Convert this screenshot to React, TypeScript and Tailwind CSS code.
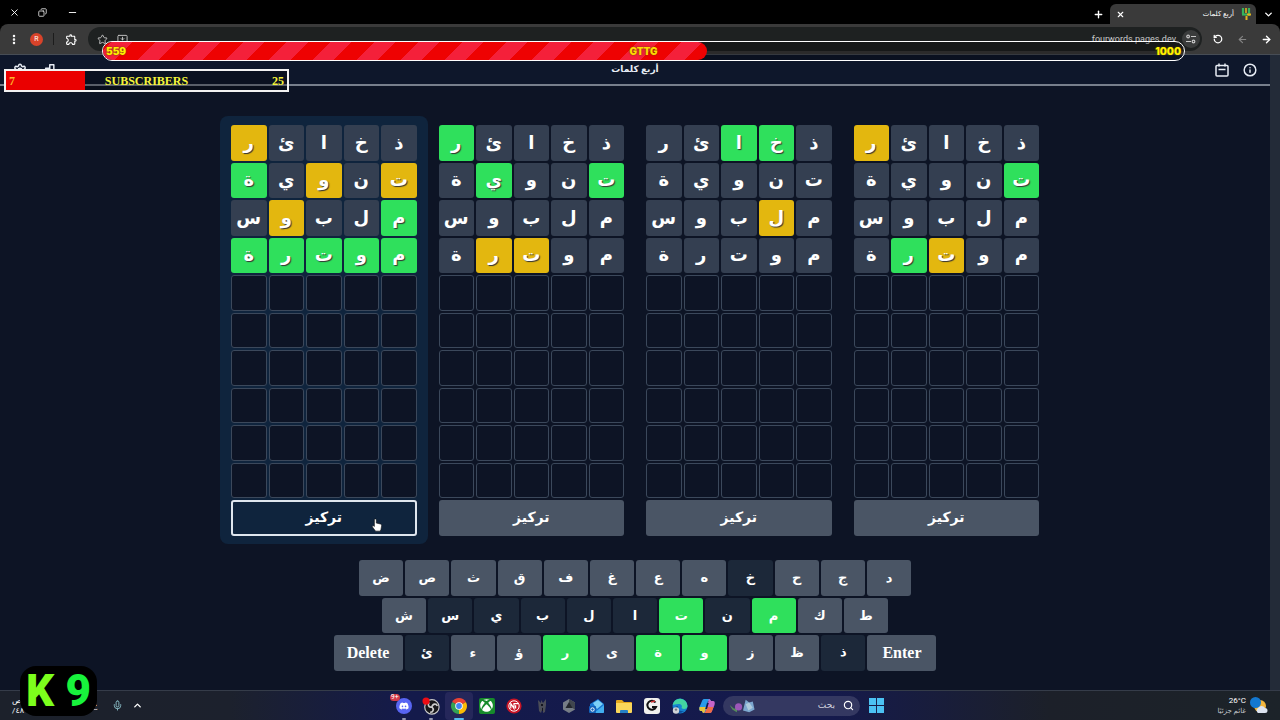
import type { ReactNode } from "react";
import {
  ArrowLeft,
  ArrowRight,
  ChevronDown,
  ChevronUp,
  Copy,
  EllipsisVertical,
  Info,
  Mic,
  Minus,
  MonitorDown,
  Plus,
  RotateCcw,
  Search,
  Settings,
  Star,
  X,
} from "lucide-react";
import { FaDiscord, FaXbox } from "react-icons/fa6";
import { MdOutlineExtension } from "react-icons/md";
import clsx from "clsx";

const guesses = ["ذخائر", "تنوية", "ملبوس", "موترة"];

// g = right place, y = wrong place, - = not in the word; first mark is the rightmost letter
const boards = [
  { id: 1, focused: true, marks: ["----y", "y-y-g", "g--y-", "ggggg"] },
  { id: 2, focused: false, marks: ["----g", "g--g-", "-----", "--yy-"] },
  { id: 3, focused: false, marks: ["-gg--", "-----", "-y---", "-----"] },
  { id: 4, focused: false, marks: ["----y", "g----", "-----", "--yg-"] },
];

const ROWS = 10;

const cellStyles: Record<string, string> = {
  g: "bg-[#2fe05c] [text-shadow:1px_1px_1px_#333]",
  y: "bg-[#e3b70f] [text-shadow:1px_1px_1px_#333]",
  "-": "bg-[#343f51]",
};

const keyRows = [
  { keys: "ضصثقفغعهخحجد", width: "max-w-[552px]" },
  { keys: "شسيبلاتنمكط", width: "max-w-[506px]" },
  { keys: "ئءؤرىةوزظذ", width: "max-w-[603px]" },
];
const foundKeys = "تمرةو";
const usedKeys = "خسيبلانئذ";

function Board({ marks, focused }: { marks: string[]; focused: boolean }) {
  return (
    <section className={clsx("rounded-lg px-[11px] pt-[9px] pb-2", focused && "bg-[#0f243d]")}>
      <div dir="rtl" className="grid h-[411px] grid-cols-5 grid-rows-11 gap-0.5">
        {Array.from({ length: ROWS * 5 }, (_, i) => {
          const row = Math.floor(i / 5);
          const letter = guesses[row]?.[i % 5];
          return letter ? (
            <div
              key={i}
              className={clsx(
                "flex items-center justify-center rounded-[3px] text-lg leading-none font-bold text-white",
                cellStyles[marks[row][i % 5]]
              )}
            >
              {letter}
            </div>
          ) : (
            <div key={i} className="rounded-[3px] border border-[#3b485b] bg-[#0d1425]" />
          );
        })}
        <button
          type="button"
          className={clsx(
            "col-span-5 rounded-[3px] text-sm leading-none font-bold text-white",
            focused ? "border-2 border-[#dfe6ee] bg-[#0f243d]" : "bg-[#4a5565]"
          )}
        >
          تركيز
        </button>
      </div>
    </section>
  );
}

function Key({ label, wide = false }: { label: string; wide?: boolean }) {
  return (
    <button
      type="button"
      className={clsx(
        "rounded-[3px] font-bold text-white",
        wide ? "w-[69px] text-base" : "min-w-0 flex-1 text-[13px]",
        !wide && foundKeys.includes(label) ? "bg-[#2fe05c]" : !wide && usedKeys.includes(label) ? "bg-[#1c2839]" : "bg-[#4a5565]"
      )}
    >
      {label}
    </button>
  );
}

function Keyboard() {
  return (
    <div className="mt-4 grid h-[111px] grid-rows-3 gap-0.5">
      {keyRows.map(({ keys, width }, i) => (
        <div key={keys} className={clsx("mx-auto flex w-full gap-0.5", width)}>
          {i === 2 && <Key label="Delete" wide />}
          {keys.split("").map((k) => (
            <Key key={k} label={k} />
          ))}
          {i === 2 && <Key label="Enter" wide />}
        </div>
      ))}
    </div>
  );
}

function IconButton({ label, className, children }: { label: string; className?: string; children: ReactNode }) {
  return (
    <button type="button" aria-label={label} className={clsx("flex shrink-0 items-center justify-center", className)}>
      {children}
    </button>
  );
}

function Browser() {
  return (
    <div className="bg-black font-['Roboto','DejaVu_Sans',sans-serif] text-white">
      <div className="flex h-6 items-end justify-between pr-1.5">
        <div className="flex h-6 items-center gap-4 pl-2">
          <IconButton label="Close window" className="w-3"><X size={11} /></IconButton>
          <IconButton label="Restore" className="w-3"><Copy size={9} className="-scale-x-100" /></IconButton>
          <IconButton label="Minimize" className="w-4"><Minus size={11} /></IconButton>
        </div>
        <div className="flex h-5 items-center">
          <IconButton label="New tab" className="mr-1.5 w-3"><Plus size={11} strokeWidth={3} /></IconButton>
          <div className="flex h-full w-[146px] items-center justify-between rounded-t-md bg-[#3a3a3a] px-1">
            <IconButton label="Close tab" className="w-3"><X size={9} strokeWidth={3} /></IconButton>
            <div className="flex items-center gap-1.5">
              <span dir="rtl" className="text-[7px] leading-none">أربع كلمات</span>
              <svg viewBox="0 0 10 12" className="h-3 w-3">
                <path d="M2 0v6" stroke="#35b45b" strokeWidth="2.2" />
                <path d="M5 0v5" stroke="#e2b31d" strokeWidth="1.6" />
                <path d="M8 0v8" stroke="#35b45b" strokeWidth="2.2" />
                <path d="M1 6.500h5" stroke="#35b45b" strokeWidth="2.2" />
                <path d="M6 6.500h4M5.500 8v4" stroke="#e2b31d" strokeWidth="2" />
              </svg>
            </div>
          </div>
          <IconButton label="Search tabs" className="ml-1.5 w-3"><ChevronDown size={11} strokeWidth={3} /></IconButton>
        </div>
      </div>
      <div className="flex h-[31px] items-center rounded-t-lg border-b border-[#474d55] bg-[#3a3a3a] px-2">
        <IconButton label="Menu" className="w-3"><EllipsisVertical size={13} strokeWidth={3} /></IconButton>
        <IconButton label="Profile" className="ml-2.5 h-[13px] w-[13px] rounded-full bg-[#d8432a] text-[7px]">R</IconButton>
        <span className="mx-2.5 h-3 w-px bg-[#1c1c1c]" />
        <IconButton label="Extensions" className="w-3.5"><MdOutlineExtension size={13} /></IconButton>
        <div className="ml-2.5 flex h-6 flex-1 items-center justify-between rounded-full bg-[#1e2121] pr-0.5 pl-2 text-[#c9c9c9]">
          <div className="flex items-center gap-2">
            <IconButton label="Bookmark" className="w-3"><Star size={11} /></IconButton>
            <IconButton label="Install app" className="w-3"><MonitorDown size={11} /></IconButton>
          </div>
          <div className="flex items-center gap-1.5">
            <span className="text-[9px] leading-none">fourwords.pages.dev</span>
            <IconButton label="Site settings" className="h-[18px] w-[18px] rounded-full bg-[#3a3c3c]">
              <svg viewBox="0 0 12 12" className="h-2.5 w-2.5" fill="none" stroke="currentColor" strokeWidth="1.4">
                <circle cx="2.500" cy="3" r="1.600" />
                <path d="M6 3h6M0 9h6" />
                <circle cx="9" cy="9" r="1.600" />
              </svg>
            </IconButton>
          </div>
        </div>
        <div className="ml-2.5 flex items-center gap-3">
          <IconButton label="Reload" className="w-3"><RotateCcw size={10} strokeWidth={3} /></IconButton>
          <IconButton label="Forward" className="w-3 text-[#858585]"><ArrowLeft size={11} strokeWidth={2.5} /></IconButton>
          <IconButton label="Back" className="w-3"><ArrowRight size={11} strokeWidth={3} /></IconButton>
        </div>
      </div>
    </div>
  );
}

function Header() {
  return (
    <header className="grid h-[31px] grid-cols-[1fr_auto_1fr] items-center border-b-2 border-[#777f8c] bg-[#0e172b] px-3 text-[#e8edf5]">
      <div className="flex gap-3">
        <IconButton label="الإعدادات" className="w-4"><Settings size={14} strokeWidth={2.5} /></IconButton>
        <IconButton label="الإحصائيات" className="w-4">
          <svg viewBox="0 0 24 24" className="h-3.5 w-3.5" fill="none" stroke="currentColor" strokeWidth="2.5" strokeLinejoin="round">
            <path d="M2 15h6v6H2zM8 9h7v12H8zM15 3h7v18h-7z" />
          </svg>
        </IconButton>
      </div>
      <h1 dir="rtl" className="text-[9px] leading-none font-bold">أربع كلمات</h1>
      <div className="flex justify-end gap-3">
        <IconButton label="التقويم" className="w-4">
          <svg viewBox="0 0 14 14" className="h-3.5 w-3.5" fill="none" stroke="currentColor" strokeWidth="1.5">
            <rect x="1" y="2.500" width="12" height="10.500" rx="1" />
            <path d="M4 .5v3M10 .5v3M3.500 6.500h7" />
          </svg>
        </IconButton>
        <IconButton label="معلومات" className="w-4"><Info size={14} strokeWidth={2.5} /></IconButton>
      </div>
    </header>
  );
}

function StreamOverlay() {
  return (
    <>
      <div className="absolute top-[41px] right-[95px] left-[102px] h-5 overflow-hidden rounded-full border border-white bg-black/25 font-['Inter',sans-serif] text-[10px] leading-none font-black text-[#fff000] [text-shadow:0_0_2px_#5a4a00]">
        <div
          className="h-full rounded-r-full bg-[repeating-linear-gradient(135deg,#ee0202_0_6px,#f4203a_6px_21px,#ee0202_21px_31px)]"
          style={{ width: `${(559 / 1000) * 100}%` }}
        />
        <div className="absolute inset-0 grid grid-cols-3 items-center px-[3px]">
          <span>559</span>
          <span className="text-center text-[#ffd800]">GTTG</span>
          <span className="text-right">1000</span>
        </div>
      </div>
      <div className="absolute top-[69px] left-1 h-[23px] w-[285px] border-2 border-[#f2f2f2] bg-black/25 text-xs leading-none font-bold text-[#f5f53a]">
        <div className="h-full bg-[#ea0000]" style={{ width: `${(7 / 25) * 100}%` }} />
        <div className="absolute inset-0 grid grid-cols-[1fr_auto_1fr] items-center px-[3px]">
          <span className="text-[#ffb52a]">7</span>
          <span>SUBSCRIBERS</span>
          <span className="text-right">25</span>
        </div>
      </div>
      <div className="absolute bottom-1 left-5 flex h-[50px] w-[77px] items-center justify-between rounded-2xl bg-black px-1.5 font-['Roboto',sans-serif] text-[44px] leading-none font-black">
        <span className="text-[#7dff1c]">K</span>
        <span className="text-[#18f43c]">9</span>
      </div>
    </>
  );
}

function Pointer() {
  return (
    <svg viewBox="0 0 12 16" className="pointer-events-none absolute top-[518px] left-[371px] h-3.5 w-3">
      <path
        d="M3.3 1.2c.9-.5 1.8.1 1.9 1v3.6l4.6 1c1.1.3 1.6 1 1.5 2.2l-.8 4.2-.9 1.8H4.4L.8 10.3c-.6-1 .5-2 1.500-1.200l.7.6V2.100c0-.4.1-.7.3-.9z"
        fill="#fff"
        stroke="#111"
        strokeWidth=".7"
      />
    </svg>
  );
}

const apps: { name: string; open?: boolean; icon: ReactNode }[] = [
  {
    name: "Discord",
    open: true,
    icon: (
      <span className="relative flex h-4 w-4 items-center justify-center rounded-full bg-[#5865f2]">
        <FaDiscord size={10} />
        <span className="absolute -top-1 -left-1.5 rounded-full bg-[#d33a4a] px-px text-[7px] leading-none">9+</span>
      </span>
    ),
  },
  {
    name: "OBS Studio",
    open: true,
    icon: (
      <svg viewBox="0 0 20 20" className="h-[18px] w-[18px]">
        <circle cx="11" cy="11" r="8" fill="#17171a" stroke="#c9c9c9" strokeWidth="1.3" />
        <path d="M11 11c-4 1-5-3-3-5M11 11c1-4 5-4 6-1M11 11c3 3 1 6-2 6" stroke="#ccc" strokeWidth="1.8" fill="none" />
        <circle cx="4.500" cy="4.500" r="4" fill="#ed0c14" />
      </svg>
    ),
  },
  {
    name: "Chrome",
    open: true,
    icon: (
      <svg viewBox="0 0 20 20" className="h-4 w-4">
        <path d="M10 10 1.340 5A10 10 0 0 1 18.660 5z" fill="#e94335" />
        <path d="M10 10 18.660 5A10 10 0 0 1 10 20z" fill="#fbbc05" />
        <path d="M10 10v10A10 10 0 0 1 1.340 5z" fill="#34a353" />
        <circle cx="10" cy="10" r="4.700" fill="#fff" />
        <circle cx="10" cy="10" r="3.600" fill="#4285f4" />
      </svg>
    ),
  },
  {
    name: "Xbox",
    icon: (
      <span className="flex h-4 w-4 items-center justify-center rounded-xs bg-[#168a2b]">
        <FaXbox size={13} />
      </span>
    ),
  },
  {
    name: "Nitro",
    icon: (
      <svg viewBox="0 0 20 20" className="h-4 w-4">
        <circle cx="10" cy="10" r="9.500" fill="#c81425" />
        <circle cx="10" cy="10" r="6.500" fill="none" stroke="#fff" strokeWidth="1.2" />
        <path d="M6 13V7l4 6V7h5M12 9v4" stroke="#fff" strokeWidth="1.5" fill="none" />
      </svg>
    ),
  },
  {
    name: "Game",
    icon: (
      <svg viewBox="0 0 16 16" className="h-4 w-4">
        <path d="M4 2l3 3V2l2 3 3-4v6l-1 7-2 1V9L7 15l-2-2z" fill="#4b4d57" />
        <path d="M7 6h2v2H7zM8 10h1v3H8z" fill="#14151f" />
      </svg>
    ),
  },
  {
    name: "Launcher",
    icon: (
      <svg viewBox="0 0 16 16" className="h-4 w-4">
        <path d="M8 1l6 3.500v7L8 15l-6-3.500v-7z" fill="#767d86" />
        <path d="M8 1l6 3.500v7L8 8z" fill="#40464e" />
        <path d="M8 4l3.500 6h-7z" fill="#22262c" />
      </svg>
    ),
  },
  {
    name: "Outlook",
    icon: (
      <svg viewBox="0 0 16 16" className="h-4 w-4">
        <path d="M1 6l8-5 6 5v8a1 1 0 0 1-1 1H3a2 2 0 0 1-2-2z" fill="#1776d2" />
        <path d="M4 5l5-3 5 4-6 5z" fill="#7cd0f7" />
        <path d="M15 7v7a1 1 0 0 1-1 1H5z" fill="#42aef0" />
        <rect x="0" y="8" width="7" height="7" rx="1" fill="#1261b8" />
        <circle cx="3.500" cy="11.500" r="1.700" fill="none" stroke="#fff" />
      </svg>
    ),
  },
  {
    name: "File Explorer",
    icon: (
      <svg viewBox="0 0 16 16" className="h-4 w-4">
        <path d="M0 3a1 1 0 0 1 1-1h5l2 2h7a1 1 0 0 1 1 1v9H0z" fill="#e6a91d" />
        <path d="M0 5h16v9a1 1 0 0 1-1 1H1a1 1 0 0 1-1-1z" fill="#fbd75a" />
        <path d="M4 15v-2a1 1 0 0 1 1-1h6a1 1 0 0 1 1 1v2z" fill="#2580c8" />
      </svg>
    ),
  },
  {
    name: "Logitech G",
    icon: (
      <svg viewBox="0 0 16 16" className="h-4 w-4">
        <rect width="16" height="16" rx="3" fill="#f1f1ee" />
        <path d="M11.500 4.500A4.500 4.500 0 1 0 12 9H8" fill="none" stroke="#111" strokeWidth="2" />
        <path d="M7 4l4-1" stroke="#cf3030" strokeWidth="1.500" />
      </svg>
    ),
  },
  {
    name: "Edge",
    icon: (
      <svg viewBox="0 0 16 16" className="h-4 w-4">
        <circle cx="8" cy="8" r="7.500" fill="#1683cf" />
        <path d="M.6 7A7.500 7.500 0 0 1 15.500 8c0 3-4 4-6 2 1-2 0-4-3-4S1.500 7 .6 7z" fill="#43d4a0" />
        <path d="M6 8c-1 3 2 6 6 5-3 3-8 2-9-2 0-2 1-3 3-3z" fill="#0c4e9c" />
        <circle cx="4" cy="12.500" r="3.200" fill="#cfd3d6" />
        <circle cx="4" cy="11.600" r="1.200" fill="#737a82" />
      </svg>
    ),
  },
  {
    name: "Copilot",
    icon: (
      <svg viewBox="0 0 16 16" className="h-4 w-4">
        <path d="M5 1h5c1 0 1.500 1 2 2H9L7 12c-.5 2-1 3-2 3s-1.500-1-2-2H2c-2 0-2-2-1.500-4L3 3c.4-1 1-2 2-2z" fill="#2a9be8" />
        <path d="M.5 9H7l-1 4c-.3 1-.7 2-1.500 2S3.500 14 3 13H2C.3 13 .1 11 .5 9z" fill="#e9c33a" />
        <path d="M10 1c1 0 1.500 1 2 2h2c2 0 2 2 1.500 4L13 13c-.4 1-1 2-2 2H5c1 0 1.500-1 2-3l2-7c.5-2 .5-4 1-4z" fill="#c765c8" />
        <path d="M8 9h6.500L13 13c-.4 1-1 2-2 2H5c1 0 1.500-1 2-3z" fill="#f06b43" />
        <path d="M8 5h1.800L8 11H6.200z" fill="#151a4c" />
      </svg>
    ),
  },
];

function Taskbar() {
  return (
    <footer className="grid h-[30px] grid-cols-[1fr_auto_1fr] items-center border-t border-[#353c49] bg-[linear-gradient(90deg,#1c212b_0%,#1c212d_18%,#141a4b_32%,#151a4c_65%,#1c2029_82%,#1c2329_100%)] font-['Roboto','DejaVu_Sans',sans-serif] text-white">
      <div className="flex items-center pl-3">
        <div className="w-20 text-[8px] leading-[10px]">
          <div>ص</div>
          <div dir="rtl" className="w-3">٤٨/</div>
        </div>
        <span className="text-[9px] leading-none">ع</span>
        <IconButton label="Microphone" className="ml-3.5 w-3 text-[#8dc3cc]"><Mic size={11} /></IconButton>
        <IconButton label="Hidden icons" className="ml-2 w-3"><ChevronUp size={11} strokeWidth={3} /></IconButton>
      </div>
      <nav className="flex items-center">
        <div className="flex w-[331px]">
          {apps.map(({ name, open, icon }) => (
            <IconButton
              key={name}
              label={name}
              className={clsx("relative h-7 flex-1 rounded-sm", name === "Chrome" && "bg-[#25275a]")}
            >
              {icon}
              {open && (
                <span
                  className={clsx(
                    "absolute bottom-0 h-0.5 rounded-full",
                    name === "Chrome" ? "w-2.5 bg-[#55bdf0]" : "w-1 bg-[#9297ad]"
                  )}
                />
              )}
            </IconButton>
          ))}
        </div>
        <label className="mx-0.5 flex h-5 w-[137px] items-center gap-1 rounded-full bg-[#343861] px-1.5">
          <svg viewBox="0 0 30 18" className="h-4 w-7 shrink-0">
            <path d="M0 8l5 4 4-2-1 6-5-3z" fill="#548c5a" />
            <circle cx="10" cy="10" r="4" fill="#9b56b8" />
            <path d="M15 14l3-12 4 3 4-1 2 9-6 3z" fill="#7ca7cf" />
            <path d="M18 7l4-2 4 6-5 3z" fill="#aecbdd" />
          </svg>
          <input
            dir="rtl"
            aria-label="بحث"
            placeholder="بحث"
            className="min-w-0 flex-1 bg-transparent text-[9px] outline-none placeholder:text-[#d0d2de]"
          />
          <Search size={11} className="ml-1 shrink-0" strokeWidth={2.5} />
        </label>
        <IconButton label="Start" className="h-7 w-7">
          <svg viewBox="0 0 16 16" className="h-[15px] w-[15px]" fill="#4cc2f3">
            <path d="M0 0h7.500v7.500H0zM8.500 0H16v7.500H8.500zM0 8.500h7.500V16H0zM8.500 8.500H16V16H8.500z" />
          </svg>
        </IconButton>
      </nav>
      <div className="flex items-center justify-end gap-1 pr-3">
        <div className="text-right text-[8px] leading-[10px]">
          <div>26°C</div>
          <div dir="rtl" className="text-[7px] text-[#c3c6cb]">غائم جزئيًا</div>
        </div>
        <svg viewBox="0 0 18 18" className="h-[18px] w-[18px]">
          <circle cx="10" cy="9" r="6" fill="#f3b63c" />
          <path d="M8 16a3 3 0 0 1 0-5 4 4 0 0 1 7 0 2.500 2.500 0 0 1 0 5z" fill="#dde4f0" />
          <circle cx="5.500" cy="5.500" r="5.500" fill="#1478cf" />
        </svg>
      </div>
    </footer>
  );
}

export default function App() {
  return (
    <div className="relative flex min-h-screen flex-col overflow-hidden bg-[#0d1425] font-['Liberation_Serif','DejaVu_Sans',serif]">
      <Browser />
      <div className="flex flex-1">
        <div className="flex flex-1 flex-col">
          <Header />
          <main className="flex-1 pt-[30px]">
            <div className="mx-auto grid max-w-[830px] grid-cols-4">
              {boards.map((board) => (
                <Board key={board.id} marks={board.marks} focused={board.focused} />
              ))}
            </div>
            <Keyboard />
          </main>
        </div>
        <div className="w-2.5 bg-[#232b38]" />
      </div>
      <Taskbar />
      <StreamOverlay />
      <Pointer />
    </div>
  );
}
